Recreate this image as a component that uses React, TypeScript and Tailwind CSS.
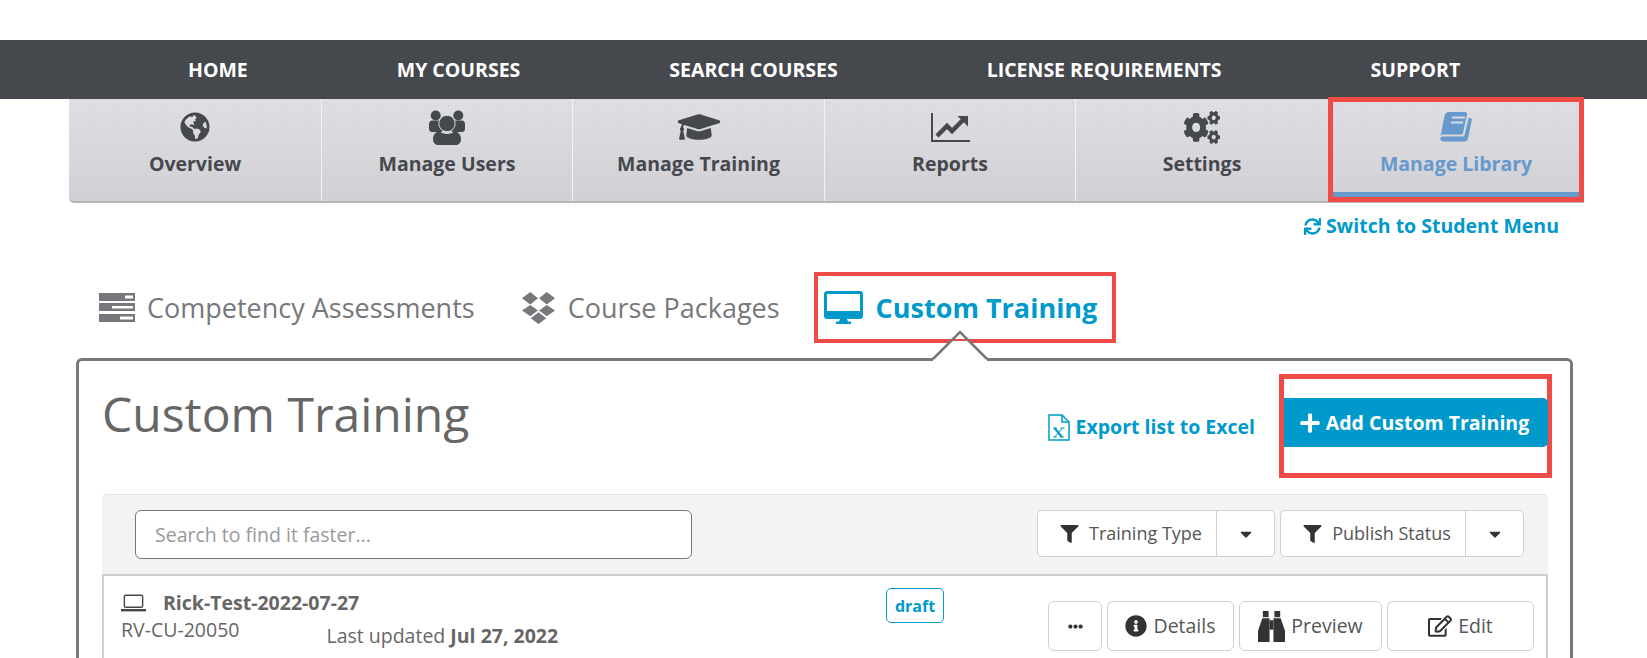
import React from 'react';
import {
  FaCaretDown,
  FaCogs,
  FaEllipsisH,
  FaFilter,
  FaGlobeAmericas,
  FaGraduationCap,
  FaInfoCircle,
  FaPlus,
  FaRegEdit,
  FaSync,
} from 'react-icons/fa';

const UsersIcon = () => (
  <svg viewBox="0 0 36 35" className="w-[36px] h-[35px] fill-[#45484d]">
    <circle cx="6.7" cy="5.5" r="5" />
    <circle cx="29.3" cy="5.5" r="5" />
    <path d="M0 14c0-2 1.500-3.500 3-3.500h8c2 0 3 1 3 3v6c0 1.500-1 2.500-2.500 2.500H3c-2 0-3-1.500-3-3z" />
    <path d="M36 14c0-2-1.500-3.500-3-3.500h-8c-2 0-3 1-3 3v6c0 1.500 1 2.500 2.500 2.500H33c2 0 3-1.500 3-3z" />
    <circle cx="18" cy="13.5" r="8.200" stroke="#dcdce0" strokeWidth="1" />
    <path d="M4 29c0-4 2.500-7 6-8 2 2 5 3 8 3s6-1 8-3c3.500 1 6 4 6 8 0 3.500-2 6-5 6H9c-3 0-5-2.500-5-6z" />
  </svg>
);

const ChartIcon = () => (
  <svg viewBox="0 0 39 29" className="w-[39px] h-[29px] fill-[#45484d]">
    <rect x="0" y="0" width="2" height="29" />
    <rect x="0" y="27" width="39" height="2" />
    <polyline points="6,23 16,13 21,18 32,7" fill="none" stroke="#45484d" strokeWidth="4.500" />
    <polygon points="26.500,3 37,3 37,13.500" />
  </svg>
);

const BookIcon = () => (
  <svg viewBox="0 0 32 30" className="w-[32px] h-[30px] fill-[#6699cc]">
    <path d="M9 0h16c1.500 0 2.300 1 2 2.500L23 21c-.2 1-1 1.500-2 1.500H3.500c-1 0-2 .4-3 1.500L4.500 4C5 1.500 7 0 9 0z" />
    <path d="M.3 26c.3-1 1.500-1.500 3-1.500H22c1.500 0 2.500-.8 2.800-2.300L28.700 5.500 32 7l-4 19.500c-.4 1.800-1.500 3-3.500 3H4c-2.500 0-4-1.500-3.700-3.500z" />
    <rect x="12" y="4.500" width="13" height="2" fill="#dcdce0" />
    <rect x="11" y="9.500" width="12" height="2" fill="#dcdce0" />
  </svg>
);

const ServerIcon = () => (
  <svg viewBox="0 0 36 29" className="w-[36px] h-[29px] fill-[#76787c]">
    <rect x="0" y="0" width="36" height="8" />
    <rect x="0" y="10" width="36" height="8" />
    <rect x="0" y="21" width="36" height="8" />
    <rect x="26" y="2.500" width="8" height="3" fill="#fff" />
    <rect x="13" y="13" width="21" height="2.500" fill="#fff" />
    <rect x="21" y="23.500" width="13" height="3" fill="#fff" />
  </svg>
);

const DropboxIcon = () => (
  <svg viewBox="0 0 32 31" className="w-[33px] h-[32px] fill-[#76787c]">
    <polygon points="8,0 15.500,6 8,12 0,6" />
    <polygon points="24,0 32,6 24,12 16.500,6" />
    <polygon points="8,12.500 15.500,18 8,23.500 0,18" />
    <polygon points="24,12.500 32,18 24,23.500 16.500,18" />
    <polygon points="16,19.500 23.500,25.500 16,31 8.500,25.500" />
  </svg>
);

const MonitorIcon = () => (
  <svg viewBox="0 0 39 33" className="ml-[6px] w-[39px] h-[33px] fill-[#0099cc]">
    <path fillRule="evenodd" d="M3 0h33c1.700 0 3 1.300 3 3v22c0 1.700-1.300 3-3 3H3c-1.700 0-3-1.300-3-3V3c0-1.700 1.300-3 3-3zM3 3v17h33V3z" />
    <polygon points="16,28 23,28 24,30.500 27,30.500 27,33 12,33 12,30.500 15,30.500" />
  </svg>
);

const LaptopIcon = () => (
  <svg viewBox="0 0 26 18" className="w-[25px] h-[18px]" fill="none" stroke="#45484d">
    <rect x="3.500" y="1" width="19" height="12.500" rx="1.500" strokeWidth="1.500" />
    <path d="M0 16.500h26" strokeWidth="2.500" />
  </svg>
);

const ExcelIcon = () => (
  <svg viewBox="0 0 22 27" className="w-[22px] h-[27px]" fill="none" stroke="#0099cc" strokeWidth="1.500">
    <path d="M1 1h13l7 7v18H1z" />
    <path d="M14 1v7h7" />
    <path d="M6.500 14l7.500 9" strokeWidth="2.200" />
    <path d="M14.500 14l-8 9" strokeWidth="1" />
    <path d="M5 14h4M12.500 14h4M5 23h4M12 23h4" strokeWidth="1" />
  </svg>
);

const BinocularsIcon = () => (
  <svg viewBox="0 0 28 30" preserveAspectRatio="none" className="w-[27px] h-[31px] fill-[#333]">
    <rect x="5" y="0" width="6" height="6" />
    <rect x="17" y="0" width="6" height="6" />
    <polygon points="4.500,7 12,7 12,30 0,30 0,19" />
    <polygon points="23.500,7 16,7 16,30 28,30 28,19" />
    <rect x="12" y="9" width="4" height="9" />
  </svg>
);

const navItems = ['HOME', 'MY COURSES', 'SEARCH COURSES', 'LICENSE REQUIREMENTS', 'SUPPORT'];

const adminTabs = [
  { label: 'Overview', width: 'w-[253px]', icon: <FaGlobeAmericas className="w-[30px] h-[30px] text-[#45484d]" /> },
  { label: 'Manage Users', width: 'w-[251px]', icon: <UsersIcon /> },
  { label: 'Manage Training', width: 'w-[252px]', icon: <FaGraduationCap className="w-[44px] h-[34px] text-[#45484d]" /> },
  { label: 'Reports', width: 'w-[251px]', icon: <ChartIcon /> },
  { label: 'Settings', width: 'w-[253px]', icon: <FaCogs preserveAspectRatio="none" className="w-[36px] h-[33px] text-[#45484d]" /> },
];

function FilterDropdown({ label, width }: { label: string; width: string }) {
  return (
    <div className={`flex h-[47px] bg-white border border-[#d0d0d0] rounded-[5px] text-[18px] ${width}`}>
      <div className="flex-1 flex items-center justify-center gap-[10px] pl-[8px] border-r border-[#d0d0d0] text-[#555]">
        <FaFilter className="w-[19px] h-[18px] text-[#333]" />
        <span>{label}</span>
      </div>
      <div className="w-[57px] flex items-center justify-center">
        <FaCaretDown className="w-[18px] h-[18px] text-[#333]" />
      </div>
    </div>
  );
}

function RowButton({ className, children }: { className: string; children: React.ReactNode }) {
  return (
    <div className={`h-[50px] flex items-center justify-center gap-[6px] bg-white border border-[#d0d0d0] rounded-[6px] text-[#555] ${className}`}>
      {children}
    </div>
  );
}

export default function App() {
  return (
    <div className="h-[658px] overflow-hidden bg-white pt-[40px] text-[19.5px] font-['Open_Sans',sans-serif]">
      <nav className="h-[59px] bg-[#45484d] flex items-center pl-[113.5px] font-bold text-white">
        {navItems.map((item) => (
          <span key={item} className="px-[74.5px] whitespace-nowrap">{item}</span>
        ))}
      </nav>

      <div className="ml-[69px] w-[1515px] h-[104px] flex rounded-bl-[5px] border-b-2 border-[#b5b5b8] bg-[repeating-linear-gradient(90deg,rgba(255,255,255,0.07)_0_1px,transparent_1px_3px),repeating-linear-gradient(0deg,rgba(255,255,255,0.07)_0_1px,transparent_1px_3px),linear-gradient(#dddce1,#cfced3)] font-bold text-[#45484d]">
        {adminTabs.map((tab) => (
          <div key={tab.label} className={`${tab.width} flex flex-col items-center border-r border-[#f2f2f4]`}>
            <div className="h-[44px] mt-[6px] flex items-center">{tab.icon}</div>
            <div>{tab.label}</div>
          </div>
        ))}
        <div className="w-[256px] shrink-0 h-[105px] -mt-[2px] -ml-[1px] relative flex flex-col items-center border-[5px] border-[#ef4b47] text-[#6699cc]">
          <div className="h-[44px] mt-[3px] flex items-center"><BookIcon /></div>
          <div>Manage Library</div>
          <div className="absolute left-0 right-0 bottom-0 h-[5px] bg-[#6699cc]" />
        </div>
      </div>

      <div className="h-[46px] pr-[88px] flex items-center justify-end gap-[5px] font-bold text-[#0099cc]">
        <FaSync className="w-[17px] h-[17px]" />
        <span>Switch to Student Menu</span>
      </div>

      <div className="relative z-10 h-[71px] mt-[23px] ml-[99px] flex items-center text-[27px] text-[#76787c]">
        <ServerIcon />
        <span className="ml-[12px] mt-[2px]">Competency Assessments</span>
        <div className="ml-[47px]"><DropboxIcon /></div>
        <span className="ml-[13px] mt-[2px]">Course Packages</span>
        <div className="ml-[34px] h-[71px] w-[302px] flex items-center border-4 border-[#ef4b47] font-bold text-[#0099cc]">
          <MonitorIcon />
          <span className="ml-[13px] mt-[2px]">Custom Training</span>
        </div>
      </div>

      <div className="relative ml-[76px] w-[1497px] h-[330px] mt-[15px] border-[3px] border-[#76787c] rounded-t-[6px] pl-[23px] pr-[22px]">
        <svg viewBox="0 0 58 32" className="absolute z-20 -top-[31px] left-[852px] w-[58px] h-[32px]">
          <polygon points="19.500,11 38.500,11 56,29 56,32 2,32 2,29" fill="#fff" />
          <polyline points="2,29 29,2 56,29" fill="none" stroke="#76787c" strokeWidth="2.500" />
        </svg>

        <div className="h-[133px] flex">
          <h1 className="mt-[20px] h-[66px] text-[48px] leading-[66px] text-[#666]">Custom Training</h1>
          <div className="ml-auto h-[104px] mt-[13px] flex">
            <div className="mr-[24px] mt-[38px] h-[30px] flex items-center gap-[6px] font-bold text-[#0099cc]">
              <ExcelIcon />
              <span>Export list to Excel</span>
            </div>
            <div className="w-[273px] -mr-[4px] border-[5px] border-[#ef4b47] pt-[19px]">
              <div className="h-[49px] -mr-[1px] bg-[#0099cc] rounded-r-[5px] flex items-center justify-center gap-[5px] pr-[4px] font-bold text-white">
                <FaPlus className="w-[22px] h-[22px]" />
                <span>Add Custom Training</span>
              </div>
            </div>
          </div>
        </div>

        <div className="h-[82px] bg-[#f3f3f3] border-t border-[#e4e4e4] rounded-t-[5px] border-b-2 border-b-[#cfcfcf] flex items-start pt-[15px] pl-[33px] pr-[24px]">
          <div className="w-[557px] h-[49px] bg-white border border-[#76787c] rounded-[6px] flex items-center pl-[19px] text-[#999]">
            Search to find it faster...
          </div>
          <div className="ml-auto flex gap-[5px]">
            <FilterDropdown label="Training Type" width="w-[238px]" />
            <FilterDropdown label="Publish Status" width="w-[244px]" />
          </div>
        </div>

        <div className="h-[120px] border-l-2 border-r-2 border-[#d0d0d0] relative text-[#666]">
          <div className="pl-[17px] pt-[12px] flex items-center">
            <LaptopIcon />
            <span className="ml-[17px] font-bold">Rick-Test-2022-07-27</span>
          </div>
          <div className="pl-[17px] flex">
            <span className="-mt-[2px]">RV-CU-20050</span>
            <span className="ml-[87px] mt-[4px]">Last updated <b>Jul 27, 2022</b></span>
          </div>
          <div className="absolute top-[12px] left-[782px] w-[58px] h-[35px] flex items-center justify-center border border-[#0099cc] rounded-[5px] font-bold text-[16px] text-[#0099cc]">draft</div>
          <div className="absolute top-[25px] right-[12px] flex gap-[5px]">
            <RowButton className="w-[54px]"><FaEllipsisH className="w-[15px] h-[15px] text-[#333]" /></RowButton>
            <RowButton className="w-[127px]"><FaInfoCircle className="w-[22px] h-[22px] text-[#333]" />Details</RowButton>
            <RowButton className="w-[143px]"><BinocularsIcon />Preview</RowButton>
            <RowButton className="w-[147px]"><FaRegEdit className="w-[24px] h-[24px] text-[#333]" />Edit</RowButton>
          </div>
        </div>
      </div>
    </div>
  );
}
